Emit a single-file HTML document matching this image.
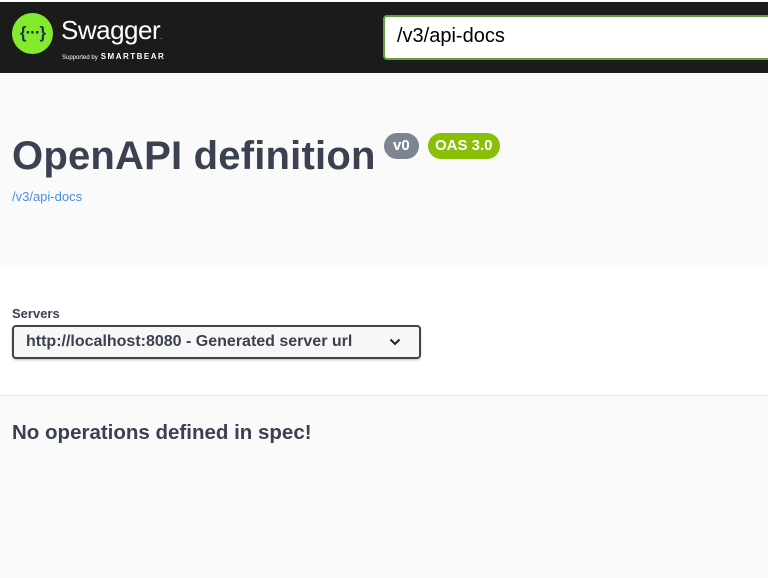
<!DOCTYPE html>
<html><head><meta charset="utf-8"><style>
*{margin:0;padding:0;box-sizing:border-box}
body{width:768px;height:578px;overflow:hidden;background:#fafafa;font-family:"Liberation Sans","Noto Sans CJK KR",sans-serif;color:#3b4151;position:relative}
.top{position:absolute;left:0;top:2px;width:768px;height:71px;background:#1b1b1b}
.logo{position:absolute;left:12px;top:13px;width:41px;height:41px;border-radius:50%;background:#85ea2d;color:#173647;font-weight:bold;font-size:17px;text-align:center;line-height:40px;letter-spacing:-1px}
.sw{position:absolute;left:61px;top:15px;color:#fff;font-size:26px;letter-spacing:-0.5px}
.sup{position:absolute;left:62px;top:52px;color:#fff;font-size:6px}
.sup b{font-size:8px;letter-spacing:1.5px;margin-left:3px}
.inp{position:absolute;left:383px;top:15px;width:400px;height:45px;background:#fff;border:2px solid #62a03f;border-radius:4px;font-size:20px;color:#000;padding:8px 0 0 12px}
h1{position:absolute;left:12px;top:134px;font-size:40px;font-weight:bold;color:#3b4151;letter-spacing:0.2px}
.b{position:absolute;top:133px;height:26px;border-radius:13px;color:#fff;font-weight:bold;font-size:15px;line-height:25px;padding:0 7px}
.link{position:absolute;left:12px;top:189px;font-size:13px;color:#4990e2}
.srv{position:absolute;left:0;top:267px;width:768px;height:129px;background:#fff;border-bottom:1px solid #e5e5e5}
.lab{position:absolute;left:12px;top:306px;font-size:13px;font-weight:bold}
.sel{position:absolute;left:12px;top:325px;width:409px;height:34px;border:2px solid #41444e;border-radius:4px;background:#f7f7f7;font-size:16px;font-weight:bold;padding:6px 0 0 12px;box-shadow:0 1px 2px rgba(0,0,0,.25)}
.no{position:absolute;left:12px;top:421px;font-size:20.5px;font-weight:bold}
</style></head><body>
<div class="top"></div>
<div class="logo">{···}</div>
<div class="sw">Swagger<span style="font-size:6px">.</span></div>
<div class="sup">Supported by<b>SMARTBEAR</b></div>
<div class="inp">/v3/api-docs</div>
<h1>OpenAPI definition</h1>
<div class="b" style="left:384px;background:#7d8492;padding:0 9px">v0</div>
<div class="b" style="left:428px;background:#89bf04">OAS 3.0</div>
<div class="link">/v3/api-docs</div>
<div class="srv"></div>
<div class="lab">Servers</div>
<div class="sel">http://localhost:8080 - Generated server url
<svg style="position:absolute;right:18px;top:11px" width="12" height="8" viewBox="0 0 12 8"><path d="M1.5 1.5L6 6l4.5-4.5" fill="none" stroke="#222" stroke-width="2"/></svg></div>
<div class="no">No operations defined in spec!</div>
</body></html>
